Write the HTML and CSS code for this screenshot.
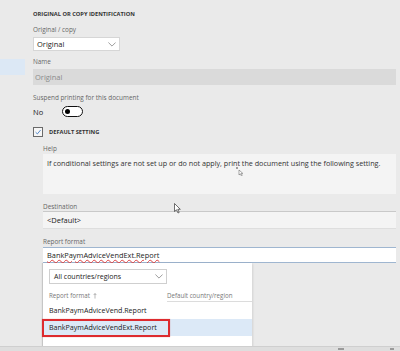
FILE: index.html
```html
<!DOCTYPE html>
<html>
<head>
<meta charset="utf-8">
<link rel="stylesheet" href="styles.css">
</head>
<body>
<div class="page">
  <aside class="nav"><div class="nav-item"></div></aside>
  <main class="form">
    <div class="section-title">ORIGINAL OR COPY IDENTIFICATION</div>
    <div class="label l-first">Original / copy</div>
    <div class="select sel-orig"><span>Original</span><svg class="chev" viewBox="0 0 10 6"><path d="M0.5 0.5 L5 5 L9.5 0.5" fill="none" stroke="#666" stroke-width="0.8"/></svg></div>
    <div class="label">Name</div>
    <div class="field-disabled">Original</div>
    <div class="label l-suspend">Suspend printing for this document</div>
    <div class="toggle-row"><span class="toggle-text">No</span><span class="toggle"><span class="knob"></span></span></div>
    <div class="check-row"><span class="checkbox"><svg viewBox="0 0 10 10"><path d="M2 5.2 L4.2 7.4 L8.2 2.6" fill="none" stroke="#2f6fbf" stroke-width="1"/></svg></span><span class="group-title">DEFAULT SETTING</span></div>
    <div class="group">
      <div class="label l-help">Help</div>
      <div class="textarea">If conditional settings are not set up or do not apply, print the document using the following setting.</div>
      <div class="label l-dest">Destination</div>
      <div class="field-ro">&lt;Default&gt;</div>
      <div class="label l-dest">Report format</div>
      <div class="lookup">
        <div class="field-input"><span class="spell">BankPaymAdviceVendExt.Report</span></div>
        <div class="popup">
          <div class="select sel-country"><span>All countries/regions</span><svg class="chev" viewBox="0 0 10 6"><path d="M0.5 0.5 L5 5 L9.5 0.5" fill="none" stroke="#666" stroke-width="0.8"/></svg></div>
          <div class="grid-head">
            <div class="col1">Report format <svg class="sort" viewBox="0 0 4 7"><path d="M2 6.5 L2 0.8 M0.4 2.4 L2 0.6 L3.6 2.4" fill="none" stroke="#777" stroke-width="0.6"/></svg></div>
            <div class="col2">Default country/region</div>
          </div>
          <div class="grid-row"><div class="col1">BankPaymAdviceVend.Report</div><div class="col2"></div></div>
          <div class="grid-row selected"><div class="col1">BankPaymAdviceVendExt.Report</div><div class="col2"></div><span class="highlight"></span></div>
        </div>
      </div>
    </div>
  </main>
</div>
<svg class="cursor cursor-arrow" viewBox="0 0 7 11"><path d="M0.5 0.5 L0.5 8.5 L2.5 6.8 L4 10 L5.2 9.4 L3.8 6.3 L6.3 6.3 Z" fill="#fff" stroke="#333" stroke-width="0.7"/></svg>
<svg class="cursor cursor-busy" viewBox="0 0 8 9"><circle cx="1" cy="1" r="0.8" fill="#333"/><path d="M3 3 L3 8 L4.3 6.8 L5.3 8.8 L6.2 8.4 L5.2 6.4 L6.8 6.4 Z" fill="#fff" stroke="#555" stroke-width="0.5"/></svg>
<div class="hscroll"><span class="mark m1"></span><span class="mark m2"></span></div>
</body>
</html>
```

FILE: styles.css
```css
html, body {
  margin: 0;
  padding: 0;
}
body {
  width: 400px;
  height: 351px;
  overflow: hidden;
  background: #eaeaea;
  font-family: "Open Sans", "Noto Sans", sans-serif;
  color: #222;
  position: relative;
}
.page {
  display: flex;
  gap: 8px;
  height: 351px;
}
.nav {
  width: 25px;
  flex: none;
}
.nav-item {
  margin-top: 59px;
  height: 16px;
  background: #dce8f5;
}
.form {
  width: 363px;
  flex: none;
  padding-top: 10px;
}
.section-title {
  font-size: 5.7px;
  font-weight: 700;
  line-height: 9px;
  color: #333;
}
.label {
  font-size: 6.4px;
  line-height: 9px;
  color: #666;
  margin-top: 6px;
}
.l-suspend { margin-top: 8px; }
.l-help { margin-top: 7px; }
.l-dest { margin-top: 8px; }
.select {
  box-sizing: border-box;
  background: #fff;
  border: 1px solid #d6d6d6;
  display: flex;
  align-items: center;
  justify-content: space-between;
  font-size: 7.5px;
  color: #222;
  padding: 0 3px 0 3px;
}
.sel-orig {
  margin-top: 3px;
  width: 87px;
  height: 14px;
}
.chev {
  width: 8px;
  height: 5px;
}
.field-disabled {
  margin-top: 3px;
  height: 16px;
  background: #dadada;
  color: #8a8a8a;
  font-size: 7.5px;
  line-height: 16px;
  padding-left: 2px;
}
.toggle-row {
  margin-top: 4px;
  height: 11px;
  display: flex;
  align-items: center;
}
.toggle-text {
  font-size: 7.5px;
  width: 29px;
  color: #222;
}
.toggle {
  box-sizing: border-box;
  width: 21px;
  height: 11px;
  border: 1px solid #111;
  border-radius: 6px;
  background: #fff;
  display: flex;
  align-items: center;
  padding-left: 2px;
}
.knob {
  width: 5px;
  height: 5px;
  border-radius: 50%;
  background: #000;
}
.check-row {
  margin-top: 10px;
  height: 10px;
  display: flex;
  align-items: center;
  gap: 6px;
}
.checkbox {
  box-sizing: border-box;
  width: 10px;
  height: 10px;
  border: 1px solid #6a6a6a;
  background: #f6f6f6;
  display: flex;
}
.checkbox svg {
  width: 8px;
  height: 8px;
}
.group-title {
  font-size: 5.7px;
  font-weight: 700;
  color: #333;
}
.group {
  margin-left: 10px;
}
.textarea {
  margin-top: 1px;
  height: 40px;
  box-sizing: border-box;
  background: #f4f4f4;
  font-size: 7.2px;
  line-height: 10px;
  padding: 4px 4px 0 4px;
  color: #333;
  white-space: nowrap;
}
.field-ro {
  box-sizing: border-box;
  height: 18px;
  background: #f4f4f4;
  border-top: 1px solid #c9c9c9;
  border-bottom: 1px solid #dedede;
  font-size: 7.5px;
  line-height: 16px;
  padding-left: 4px;
  color: #222;
}
.lookup {
  margin-top: 1px;
  position: relative;
}
.field-input {
  box-sizing: border-box;
  height: 16px;
  background: #fff;
  border-top: 1px solid #9fb6d0;
  border-bottom: 1px solid #9fb6d0;
  font-size: 7.4px;
  line-height: 14px;
  padding-left: 4px;
  color: #222;
}
.spell {
  text-decoration: underline wavy #e04040;
  text-decoration-thickness: 0.6px;
  text-underline-offset: 1px;
}
.popup {
  position: absolute;
  left: 0;
  top: 16px;
  width: 209px;
  height: 100px;
  background: #fff;
  box-shadow: -1px 0 1px rgba(0,0,0,0.15), 1px 1px 2px rgba(0,0,0,0.1);
  padding-top: 6px;
  box-sizing: border-box;
}
.sel-country {
  margin-left: 6px;
  width: 118px;
  height: 15px;
  border-color: #cfcfcf;
  padding-left: 4px;
  font-size: 7px;
}
.grid-head {
  display: flex;
  margin-top: 1px;
  padding-top: 6px;
  font-size: 6.2px;
  line-height: 9px;
  color: #777;
}
.grid-head .col1 {
  padding-bottom: 2px;
}
.grid-head .col2 {
  border-bottom: 1px solid #dcdcdc;
  padding-bottom: 1px;
}
.col1 {
  width: 118px;
  padding-left: 6px;
  flex: none;
}
.col2 {
  flex: 1;
}
.sort {
  width: 4px;
  height: 6px;
  margin-left: 2px;
  vertical-align: -0.5px;
}
.grid-row {
  display: flex;
  height: 17px;
  font-size: 7.1px;
  line-height: 17px;
  color: #222;
  position: relative;
}
.grid-row.selected {
  background: #dce9f7;
}
.highlight {
  position: absolute;
  left: -1px;
  top: 0;
  width: 128px;
  height: 18px;
  box-sizing: border-box;
  border: 2px solid #dd2b2f;
  box-shadow: 0 0 1px rgba(200,0,0,0.4);
}
.cursor {
  position: absolute;
}
.cursor-arrow {
  left: 174px;
  top: 203px;
  width: 7px;
  height: 11px;
}
.cursor-busy {
  left: 236px;
  top: 167px;
  width: 8px;
  height: 9px;
}
.hscroll {
  position: absolute;
  left: 0;
  bottom: 0;
  width: 400px;
  height: 4px;
  background: #dedede;
  border-top: 1px solid #cfcfcf;
}
.mark {
  position: absolute;
  top: 1px;
  height: 2px;
  background: #9a9a9a;
}
.m1 { left: 338px; width: 6px; }
.m2 { left: 390px; width: 4px; }
```
